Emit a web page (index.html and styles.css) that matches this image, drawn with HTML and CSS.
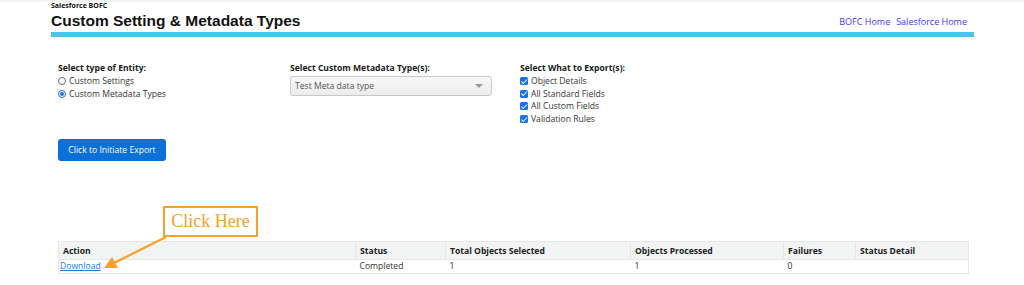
FILE: index.html
```html
<!DOCTYPE html>
<html>
<head>
<meta charset="utf-8">
<link rel="stylesheet" href="styles.css">
</head>
<body>
<div class="page">
  <div class="header">
    <div class="brand">Salesforce BOFC</div>
    <div class="title-row">
      <h1 class="title">Custom Setting &amp; Metadata Types</h1>
      <div class="links"><a href="#">BOFC Home</a><a href="#">Salesforce Home</a></div>
    </div>
    <div class="bar"></div>
  </div>

  <div class="form">
    <div class="col col-entity">
      <div class="label">Select type of Entity:</div>
      <label class="opt"><span class="radio"></span>Custom Settings</label>
      <label class="opt"><span class="radio on"></span>Custom Metadata Types</label>
    </div>
    <div class="col col-type">
      <div class="label">Select Custom Metadata Type(s):</div>
      <div class="select"><span>Test Meta data type</span><span class="caret"></span></div>
    </div>
    <div class="col col-export">
      <div class="label">Select What to Export(s):</div>
      <label class="opt"><span class="check"></span>Object Details</label>
      <label class="opt"><span class="check"></span>All Standard Fields</label>
      <label class="opt"><span class="check"></span>All Custom Fields</label>
      <label class="opt"><span class="check"></span>Validation Rules</label>
    </div>
  </div>

  <div class="actions">
    <button class="btn">Click to Initiate Export</button>
  </div>

  <div class="results">
    <div class="callout">Click Here</div>
    <svg class="arrow" width="70" height="40" viewBox="0 0 70 40">
      <line x1="66" y1="2" x2="12" y2="29" stroke="#f7a128" stroke-width="2.2"/>
      <polygon points="4,33 12,22 18,33" fill="#f7a128"/>
    </svg>
    <table class="grid">
      <thead>
        <tr>
          <th class="c-action">Action</th>
          <th class="c-status">Status</th>
          <th class="c-total">Total Objects Selected</th>
          <th class="c-proc">Objects Processed</th>
          <th class="c-fail">Failures</th>
          <th class="c-detail">Status Detail</th>
        </tr>
      </thead>
      <tbody>
        <tr>
          <td><a href="#">Download</a></td>
          <td>Completed</td>
          <td>1</td>
          <td>1</td>
          <td>0</td>
          <td></td>
        </tr>
      </tbody>
    </table>
  </div>
</div>
</body>
</html>
```

FILE: styles.css
```css
* { box-sizing: border-box; }
html, body { margin: 0; padding: 0; background: #fff; }
body {
  font-family: "Open Sans", "Noto Sans", sans-serif;
  color: #1a1a1a;
  border-top: 2px solid #f3f3f3;
}
.page { padding: 0 50px 0 51px; width: 1024px; }

.brand { font-size: 7px; font-weight: 700; line-height: 8px; padding-top: 0; color: #111; }
.title-row { display: flex; justify-content: space-between; align-items: flex-end; height: 20px; }
.title {
  margin: 0;
  font-family: "Liberation Sans", Arial, sans-serif;
  font-weight: 700;
  font-size: 15.5px;
  line-height: 18px;
  color: #111;
}
.links { display: flex; gap: 6px; padding-right: 7px; padding-bottom: 2px; }
.links a { font-size: 9px; color: #3b3bf5; text-decoration: none; line-height: 12px; }
.bar { height: 5px; background: #4bc3ef; margin-top: 2px; width: 923px; }

.form { display: flex; margin: 25px 0 0 7px; }
.col-entity { width: 232px; }
.col-type { width: 230px; }
.label { font-size: 8.6px; font-weight: 700; line-height: 12px; color: #1a1a1a; margin-bottom: 1px; }
.opt { display: flex; align-items: center; font-size: 8.6px; line-height: 12.6px; color: #333; }
.radio {
  width: 8px; height: 8px; border-radius: 50%;
  border: 1px solid #6d6d6d; margin-right: 3px; background: #fff;
  display: inline-block; position: relative;
}
.radio.on { border-color: #1a73e8; }
.radio.on::after {
  content: ""; position: absolute; left: 1px; top: 1px; width: 4px; height: 4px;
  border-radius: 50%; background: #1a73e8;
}
.check {
  width: 8px; height: 8px; border-radius: 1.5px; background: #1a73e8;
  margin-right: 3px; display: inline-block; position: relative;
}
.check::after {
  content: ""; position: absolute; left: 2.5px; top: 0.5px; width: 2px; height: 4.5px;
  border: solid #fff; border-width: 0 1.3px 1.3px 0; transform: rotate(45deg);
}
.select {
  margin-top: 2px;
  width: 202px; height: 20px;
  border: 1px solid #c8c8c8; border-radius: 3px;
  background: linear-gradient(#f8f8f8, #ececec);
  display: flex; align-items: center; justify-content: space-between;
  padding: 0 8px 0 4px;
  font-size: 8.6px; color: #555;
}
.caret {
  width: 0; height: 0;
  border-left: 4px solid transparent; border-right: 4px solid transparent;
  border-top: 4px solid #999;
}

.actions { margin: 11px 0 0 7px; }
.btn {
  background: #0b71d8; color: #fff; border: none; border-radius: 3px;
  font-family: "Open Sans", "Noto Sans", sans-serif;
  font-size: 8.6px; height: 22px; width: 108px; padding: 0;
}

.results { position: relative; padding-top: 80px; margin-left: 7px; }
.callout {
  position: absolute; left: 105px; top: 45px;
  width: 95px; height: 31px;
  border: 2px solid #f7a128;
  color: #f7a128;
  font-family: "Liberation Serif", "Times New Roman", serif;
  font-size: 18px; line-height: 27px; text-align: center;
  background: #fff;
}
.arrow { position: absolute; left: 42px; top: 74px; }

.grid { border-collapse: collapse; width: 910px; table-layout: fixed; font-size: 8.6px; }
.grid th {
  background: #f2f3f3; text-align: left; font-weight: 700; color: #222;
  height: 18px; padding: 0 4px; border: 1px solid #e6e6e6;
}
.grid td { height: 14px; padding: 0 4px; color: #333; border-bottom: 1px solid #e3e3e3; line-height: 13px; }
.grid td:first-child { padding-left: 1px; border-left: 1px solid #e6e6e6; }
.grid td:last-child { border-right: 1px solid #e6e6e6; }
.grid td a { color: #2b78d8; text-decoration: underline; }
.c-action { width: 297px; }
.c-status { width: 90px; }
.c-total { width: 185px; }
.c-proc { width: 153px; }
.c-fail { width: 72px; }
.c-detail { width: 113px; }
```
